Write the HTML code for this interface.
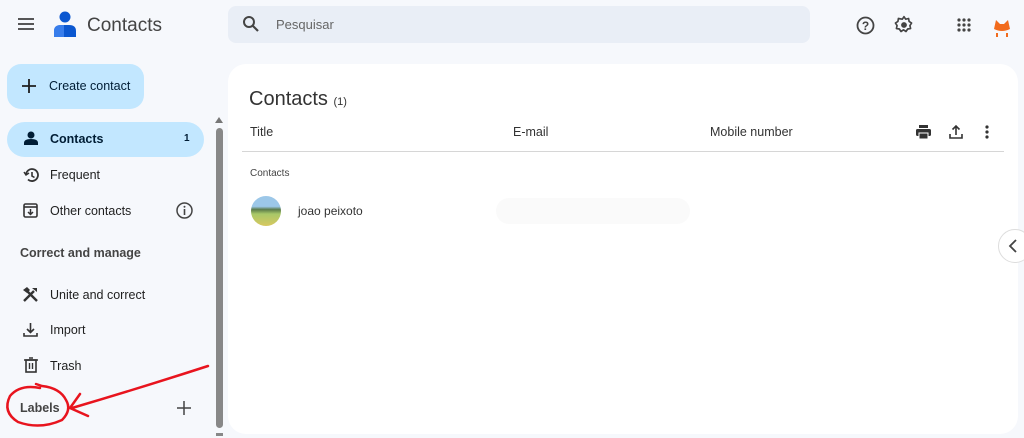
<!DOCTYPE html>
<html><head><meta charset="utf-8"><style>
*{margin:0;padding:0;box-sizing:border-box}
body{width:1024px;height:438px;background:#f6f8fc;font-family:"Liberation Sans",Arial,sans-serif;color:#1f1f1f;position:relative;overflow:hidden}
.a{position:absolute}
.nav{font-size:12.5px;color:#1f1f1f}
.ic{position:absolute}
</style></head><body>
<!-- header -->
<svg class="a" style="left:17px;top:17px" width="18" height="14"><g stroke="#444" stroke-width="1.8"><line x1="1" y1="2" x2="17" y2="2"/><line x1="1" y1="7" x2="17" y2="7"/><line x1="1" y1="12" x2="17" y2="12"/></g></svg>
<svg class="a" style="left:52px;top:10px" width="26" height="28"><circle cx="13" cy="7" r="5.5" fill="#0b57d0"/><path d="M2 27 V21 Q2 15 9 15 H17 Q24 15 24 21 V27 Z" fill="#0b57d0"/><path d="M2 27 V21 Q2 15 9 15 H12 V27Z" fill="#4c8df6" opacity=".7"/></svg>
<div class="a" style="left:87px;top:15px;font-size:19px;color:#444">Contacts</div>
<div class="a" style="left:228px;top:6px;width:582px;height:37px;background:#e9eef6;border-radius:8px"></div>
<svg class="a" style="left:242px;top:15px" width="18" height="18"><circle cx="7" cy="7" r="5" fill="none" stroke="#444" stroke-width="2"/><line x1="11" y1="11" x2="16" y2="16" stroke="#444" stroke-width="2.2"/></svg>
<div class="a" style="left:276px;top:17px;font-size:13px;color:#666">Pesquisar</div>
<svg class="a" style="left:856px;top:16px" width="19" height="19"><circle cx="9.5" cy="9.5" r="8" fill="none" stroke="#444" stroke-width="1.8"/><text x="9.5" y="14" font-size="12" text-anchor="middle" fill="#444" font-family="Liberation Sans" font-weight="bold">?</text></svg>
<svg class="a" style="left:894px;top:15px" width="20" height="20" viewBox="0 0 24 24"><path d="M12 2l2 3 3.5-.8.6 3.5 3 2-2 3 .8 3.5-3.5.6-2 3-3-2-3 2-2-3-3.5-.6.8-3.5-2-3 3-2 .6-3.5L10 5z" fill="none" stroke="#444" stroke-width="2" stroke-linejoin="round"/><circle cx="12" cy="12" r="3.5" fill="#444"/></svg>
<svg class="a" style="left:957px;top:18px" width="14" height="14"><g fill="#444"><circle cx="2" cy="2" r="1.6"/><circle cx="7" cy="2" r="1.6"/><circle cx="12" cy="2" r="1.6"/><circle cx="2" cy="7" r="1.6"/><circle cx="7" cy="7" r="1.6"/><circle cx="12" cy="7" r="1.6"/><circle cx="2" cy="12" r="1.6"/><circle cx="7" cy="12" r="1.6"/><circle cx="12" cy="12" r="1.6"/></g></svg>
<svg class="a" style="left:992px;top:17px" width="20" height="22"><path d="M2 12 L4 3 L8 7 L12 7 L16 3 L18 12 Q10 16 2 12Z" fill="#f26b1d"/><path d="M5 16 v4 M15 16 v4" stroke="#f26b1d" stroke-width="2"/></svg>
<!-- sidebar -->
<div class="a" style="left:7px;top:64px;width:137px;height:45px;background:#c2e7ff;border-radius:14px"></div>
<svg class="a" style="left:22px;top:79px" width="14" height="14"><path d="M7 0v14M0 7h14" stroke="#1f1f1f" stroke-width="1.8"/></svg>
<div class="a" style="left:49px;top:79px;font-size:12.5px;color:#001d35">Create contact</div>
<div class="a" style="left:7px;top:122px;width:197px;height:35px;background:#c2e7ff;border-radius:18px"></div>
<svg class="a" style="left:24px;top:131px" width="14" height="14"><circle cx="7" cy="4" r="3.5" fill="#001d35"/><path d="M0 14v-2q0-4 7-4t7 4v2z" fill="#001d35"/></svg>
<div class="a" style="left:50px;top:132px;font-size:12.5px;font-weight:bold;color:#001d35">Contacts</div>
<div class="a" style="left:184px;top:133px;font-size:10px;font-weight:bold;color:#001d35">1</div>
<svg class="a" style="left:23px;top:167px" width="16" height="16"><path d="M3 8a6 6 0 1 1 2 4.5" fill="none" stroke="#333" stroke-width="1.8"/><path d="M1 5l2 3 3-2" fill="none" stroke="#333" stroke-width="1.5"/><path d="M9 5v4l2.5 1.5" fill="none" stroke="#333" stroke-width="1.6"/></svg>
<div class="a nav" style="left:50px;top:168px">Frequent</div>
<svg class="a" style="left:23px;top:203px" width="15" height="15"><rect x="1" y="1" width="13" height="13" rx="1.5" fill="none" stroke="#333" stroke-width="1.6"/><line x1="1" y1="4" x2="14" y2="4" stroke="#333" stroke-width="1.6"/><path d="M7.5 6v5M5 9l2.5 2.5L10 9" fill="none" stroke="#333" stroke-width="1.5"/></svg>
<div class="a nav" style="left:50px;top:204px">Other contacts</div>
<svg class="a" style="left:176px;top:202px" width="17" height="17"><circle cx="8.5" cy="8.5" r="7.5" fill="none" stroke="#444" stroke-width="1.5"/><rect x="7.7" y="7" width="1.6" height="6" fill="#444"/><circle cx="8.5" cy="4.8" r="1" fill="#444"/></svg>
<div class="a" style="left:20px;top:246px;font-size:12.5px;font-weight:bold;color:#444">Correct and manage</div>
<svg class="a" style="left:22px;top:286px" width="17" height="17"><path d="M2 15L12 5M15 15L5 5" stroke="#333" stroke-width="2.4"/><path d="M1 4l4-3 3 3-3 3z" fill="#333"/><path d="M10 2l5 0 0 4z" fill="#333"/></svg>
<div class="a nav" style="left:50px;top:288px">Unite and correct</div>
<svg class="a" style="left:23px;top:322px" width="15" height="16"><path d="M7.5 1v9M4 7l3.5 3.5L11 7" fill="none" stroke="#333" stroke-width="1.6"/><path d="M1 11v3h13v-3" fill="none" stroke="#333" stroke-width="1.6"/></svg>
<div class="a nav" style="left:50px;top:323px">Import</div>
<svg class="a" style="left:24px;top:357px" width="14" height="16"><path d="M0 3h14M5 1h4" stroke="#333" stroke-width="1.6"/><rect x="2" y="3" width="10" height="12" fill="none" stroke="#333" stroke-width="1.6"/><path d="M5.5 6v6M8.5 6v6" stroke="#333" stroke-width="1.4"/></svg>
<div class="a nav" style="left:50px;top:359px">Trash</div>
<div class="a" style="left:20px;top:401px;font-size:12.5px;font-weight:bold;color:#444">Labels</div>
<svg class="a" style="left:177px;top:401px" width="14" height="14"><path d="M7 0v14M0 7h14" stroke="#444" stroke-width="1.5"/></svg>
<!-- scrollbar -->
<svg class="a" style="left:215px;top:117px" width="8" height="6"><path d="M0 6L4 0 8 6z" fill="#777"/></svg>
<div class="a" style="left:216px;top:128px;width:7px;height:300px;background:#888;border-radius:4px"></div>
<div class="a" style="left:216px;top:433px;width:7px;height:3px;background:#888"></div>
<!-- main -->
<div class="a" style="left:228px;top:64px;width:790px;height:370px;background:#fff;border-radius:18px"></div>
<div class="a" style="left:249px;top:88px;font-size:20px;color:#333">Contacts <span style="font-size:11px">(1)</span></div>
<div class="a" style="left:250px;top:125px;font-size:12.5px;color:#333">Title</div>
<div class="a" style="left:513px;top:125px;font-size:12.5px;color:#333">E-mail</div>
<div class="a" style="left:710px;top:125px;font-size:12.5px;color:#333">Mobile number</div>
<svg class="a" style="left:916px;top:125px" width="15" height="14"><rect x="3" y="0" width="9" height="3" fill="#333"/><rect x="0" y="4" width="15" height="7" rx="1.5" fill="#333"/><rect x="3" y="8" width="9" height="6" fill="#333" stroke="#fff" stroke-width="1"/></svg>
<svg class="a" style="left:949px;top:124px" width="14" height="15"><path d="M7 11V2M3.5 5.5L7 2l3.5 3.5" fill="none" stroke="#333" stroke-width="1.6"/><path d="M1 10v4h12v-4" fill="none" stroke="#333" stroke-width="1.6"/></svg>
<svg class="a" style="left:985px;top:125px" width="4" height="14"><circle cx="2" cy="2" r="1.6" fill="#333"/><circle cx="2" cy="7" r="1.6" fill="#333"/><circle cx="2" cy="12" r="1.6" fill="#333"/></svg>
<div class="a" style="left:242px;top:151px;width:762px;height:1px;background:#d6d6d6"></div>
<div class="a" style="left:250px;top:168px;font-size:10px;color:#444">Contacts</div>
<div class="a" style="left:251px;top:196px;width:30px;height:30px;border-radius:50%;background:linear-gradient(#9cc7e8 0%,#9cc7e8 35%,#5a7a4a 45%,#a8c868 60%,#d8c860 100%)"></div>
<div class="a" style="left:298px;top:204px;font-size:12px;color:#333">joao peixoto</div>
<div class="a" style="left:496px;top:198px;width:194px;height:26px;background:#fafafa;border-radius:13px"></div>
<div class="a" style="left:998px;top:229px;width:34px;height:34px;border-radius:50%;background:#fff;border:1px solid #ddd"></div>
<svg class="a" style="left:1008px;top:239px" width="10" height="14"><path d="M8 1L2 7l6 6" fill="none" stroke="#444" stroke-width="1.8"/></svg>
<!-- red annotation -->
<svg class="a" style="left:0;top:360px" width="220" height="78"><g fill="none" stroke="#e8141e" stroke-width="2.5" stroke-linecap="round"><path d="M40 28 Q20 24 10 36 Q2 52 18 62 Q40 70 62 60 Q72 50 66 40 Q60 28 42 26 L36 24"/><path d="M208 6 Q140 28 72 48"/><path d="M80 34 L70 48 L88 56"/></g></svg>
</body></html>
